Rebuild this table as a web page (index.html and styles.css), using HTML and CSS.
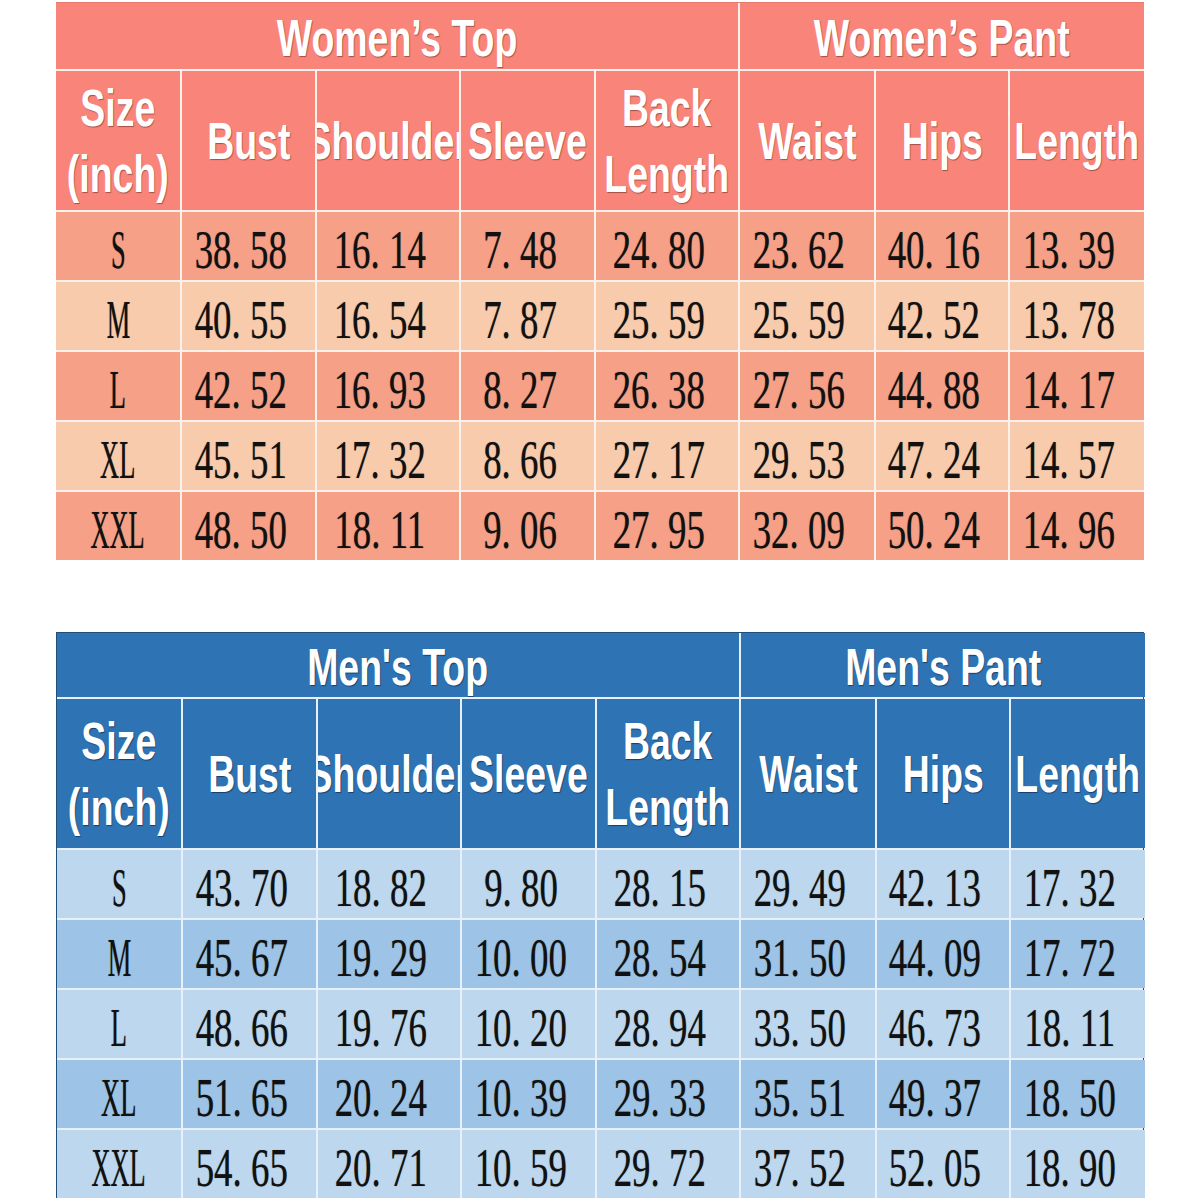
FILE: index.html
```html
<!DOCTYPE html>
<html>
<head>
<meta charset="utf-8">
<link rel="stylesheet" href="styles.css">
</head>
<body>
<div class="page">
  <div class="chart women">
    <div class="cell title span5"><span class="hx">Women’s Top</span></div>
    <div class="cell title span3"><span class="hx">Women’s Pant</span></div>
    <div class="cell head"><span class="hx">Size<br>(inch)</span></div>
    <div class="cell head"><span class="hx">Bust</span></div>
    <div class="cell head"><span class="hx">Shoulder</span></div>
    <div class="cell head"><span class="hx">Sleeve</span></div>
    <div class="cell head"><span class="hx">Back<br>Length</span></div>
    <div class="cell head"><span class="hx">Waist</span></div>
    <div class="cell head"><span class="hx">Hips</span></div>
    <div class="cell head"><span class="hx">Length</span></div>

    <div class="cell d a sz"><span class="nx">S</span></div><div class="cell d a"><span class="nx">38. 58</span></div><div class="cell d a"><span class="nx">16. 14</span></div><div class="cell d a"><span class="nx">7. 48</span></div><div class="cell d a"><span class="nx">24. 80</span></div><div class="cell d a"><span class="nx">23. 62</span></div><div class="cell d a"><span class="nx">40. 16</span></div><div class="cell d a"><span class="nx">13. 39</span></div>
    <div class="cell d b sz"><span class="nx">M</span></div><div class="cell d b"><span class="nx">40. 55</span></div><div class="cell d b"><span class="nx">16. 54</span></div><div class="cell d b"><span class="nx">7. 87</span></div><div class="cell d b"><span class="nx">25. 59</span></div><div class="cell d b"><span class="nx">25. 59</span></div><div class="cell d b"><span class="nx">42. 52</span></div><div class="cell d b"><span class="nx">13. 78</span></div>
    <div class="cell d a sz"><span class="nx">L</span></div><div class="cell d a"><span class="nx">42. 52</span></div><div class="cell d a"><span class="nx">16. 93</span></div><div class="cell d a"><span class="nx">8. 27</span></div><div class="cell d a"><span class="nx">26. 38</span></div><div class="cell d a"><span class="nx">27. 56</span></div><div class="cell d a"><span class="nx">44. 88</span></div><div class="cell d a"><span class="nx">14. 17</span></div>
    <div class="cell d b sz"><span class="nx">XL</span></div><div class="cell d b"><span class="nx">45. 51</span></div><div class="cell d b"><span class="nx">17. 32</span></div><div class="cell d b"><span class="nx">8. 66</span></div><div class="cell d b"><span class="nx">27. 17</span></div><div class="cell d b"><span class="nx">29. 53</span></div><div class="cell d b"><span class="nx">47. 24</span></div><div class="cell d b"><span class="nx">14. 57</span></div>
    <div class="cell d a sz"><span class="nx">XXL</span></div><div class="cell d a"><span class="nx">48. 50</span></div><div class="cell d a"><span class="nx">18. 11</span></div><div class="cell d a"><span class="nx">9. 06</span></div><div class="cell d a"><span class="nx">27. 95</span></div><div class="cell d a"><span class="nx">32. 09</span></div><div class="cell d a"><span class="nx">50. 24</span></div><div class="cell d a"><span class="nx">14. 96</span></div>
  </div>

  <div class="chart men">
    <div class="cell title span5"><span class="hx">Men's Top</span></div>
    <div class="cell title span3"><span class="hx">Men's Pant</span></div>
    <div class="cell head"><span class="hx">Size<br>(inch)</span></div>
    <div class="cell head"><span class="hx">Bust</span></div>
    <div class="cell head"><span class="hx">Shoulder</span></div>
    <div class="cell head"><span class="hx">Sleeve</span></div>
    <div class="cell head"><span class="hx">Back<br>Length</span></div>
    <div class="cell head"><span class="hx">Waist</span></div>
    <div class="cell head"><span class="hx">Hips</span></div>
    <div class="cell head"><span class="hx">Length</span></div>

    <div class="cell d a sz"><span class="nx">S</span></div><div class="cell d a"><span class="nx">43. 70</span></div><div class="cell d a"><span class="nx">18. 82</span></div><div class="cell d a"><span class="nx">9. 80</span></div><div class="cell d a"><span class="nx">28. 15</span></div><div class="cell d a"><span class="nx">29. 49</span></div><div class="cell d a"><span class="nx">42. 13</span></div><div class="cell d a"><span class="nx">17. 32</span></div>
    <div class="cell d b sz"><span class="nx">M</span></div><div class="cell d b"><span class="nx">45. 67</span></div><div class="cell d b"><span class="nx">19. 29</span></div><div class="cell d b"><span class="nx">10. 00</span></div><div class="cell d b"><span class="nx">28. 54</span></div><div class="cell d b"><span class="nx">31. 50</span></div><div class="cell d b"><span class="nx">44. 09</span></div><div class="cell d b"><span class="nx">17. 72</span></div>
    <div class="cell d a sz"><span class="nx">L</span></div><div class="cell d a"><span class="nx">48. 66</span></div><div class="cell d a"><span class="nx">19. 76</span></div><div class="cell d a"><span class="nx">10. 20</span></div><div class="cell d a"><span class="nx">28. 94</span></div><div class="cell d a"><span class="nx">33. 50</span></div><div class="cell d a"><span class="nx">46. 73</span></div><div class="cell d a"><span class="nx">18. 11</span></div>
    <div class="cell d b sz"><span class="nx">XL</span></div><div class="cell d b"><span class="nx">51. 65</span></div><div class="cell d b"><span class="nx">20. 24</span></div><div class="cell d b"><span class="nx">10. 39</span></div><div class="cell d b"><span class="nx">29. 33</span></div><div class="cell d b"><span class="nx">35. 51</span></div><div class="cell d b"><span class="nx">49. 37</span></div><div class="cell d b"><span class="nx">18. 50</span></div>
    <div class="cell d a sz"><span class="nx">XXL</span></div><div class="cell d a"><span class="nx">54. 65</span></div><div class="cell d a"><span class="nx">20. 71</span></div><div class="cell d a"><span class="nx">10. 59</span></div><div class="cell d a"><span class="nx">29. 72</span></div><div class="cell d a"><span class="nx">37. 52</span></div><div class="cell d a"><span class="nx">52. 05</span></div><div class="cell d a"><span class="nx">18. 90</span></div>
  </div>
</div>
</body>
</html>
```
FILE: styles.css
```css
html, body {
  margin: 0;
  padding: 0;
  background: #ffffff;
}
.page {
  display: flex;
  flex-direction: column;
  gap: 72px;
  padding: 2px 0 0 56px;
}
.chart {
  width: 1088px;
  box-sizing: border-box;
  display: grid;
  grid-template-columns: 124px 133px 142px 133px 142px 134px 132px 134px;
  gap: 2px;
  background: #fdf1ec;
}
.women {
  grid-template-rows: 66px 139px repeat(5, 68px);
  border-top: 1px solid #e87a6d;
}
.men {
  grid-template-rows: 64px 149px repeat(5, 68px);
  background: #e8f1fa;
  border-top: 1px solid #1f4e79;
  border-left: 1px solid #1f4e79;
  border-right: 1px solid #1f4e79;
}
.cell {
  display: flex;
  align-items: center;
  justify-content: center;
  overflow: hidden;
  min-width: 0;
  white-space: nowrap;
}
.span5 { grid-column: span 5; }
.span3 { grid-column: span 3; }
.women .title, .women .head { background: #f9847a; }
.men .title, .men .head { background: #2e74b5; }
.women .a { background: #f5a087; }
.women .b { background: #f8cbad; }
.men .a { background: #bdd7ee; }
.men .b { background: #9dc3e6; }

.hx {
  display: inline-block;
  font-family: "Liberation Sans", Arial, sans-serif;
  font-weight: bold;
  font-size: 52px;
  line-height: 66px;
  color: #ffffff;
  text-align: center;
  transform: scaleX(0.72);
  text-shadow: 1px 1px 1px rgba(60, 20, 10, 0.45);
}
.title .hx { line-height: 60px; margin-top: 4px; }
.men .hx { text-shadow: 1px 1px 1px rgba(0, 20, 50, 0.55); }
.d { padding-right: 16px; box-sizing: border-box; }
.d.sz { padding-right: 0; }
.nx {
  display: inline-block;
  font-family: "Liberation Serif", "Times New Roman", serif;
  font-size: 55px;
  line-height: 60px;
  color: #111111;
  transform: scaleX(0.67);
  margin-top: 8px;
  text-shadow: 0 0 1px rgba(0,0,0,0.5);
}
.sz .nx { transform: scaleX(0.48); }
```
